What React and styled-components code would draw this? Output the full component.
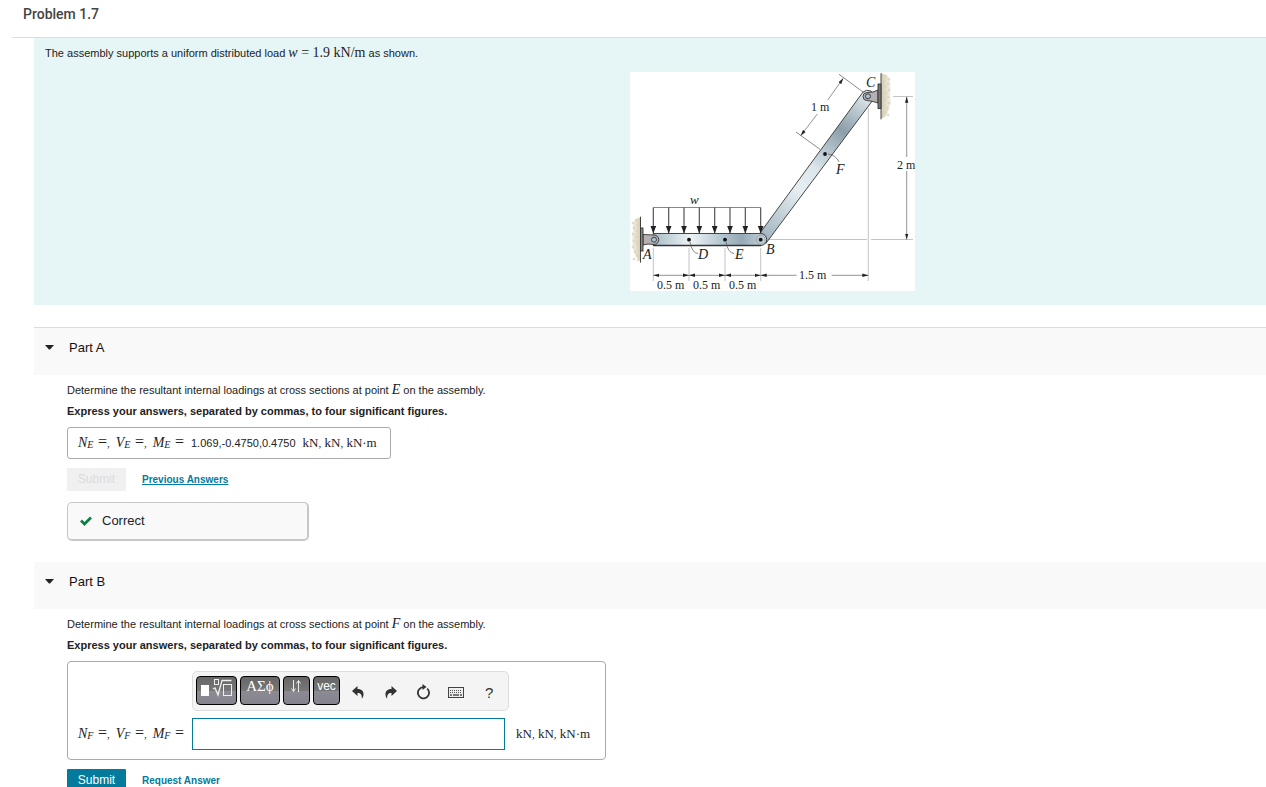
import { useState } from 'react';

import styled, { createGlobalStyle } from 'styled-components';

const dims = [
  { x: 27, text: '0.5 m' },
  { x: 63, text: '0.5 m' },
  { x: 99, text: '0.5 m' },
];
const dimLines = [
  { d: 'M197.7 28L213.3 6.3' },
  { d: 'M187.3 42L170.7 63.7' },
  { d: 'M276.7 85V24.7' },
  { d: 'M276.7 99v68.5' },
  { d: 'M23.3 203.3H59', both: true },
  { d: 'M59 203.3h36', both: true },
  { d: 'M95 203.3h35.7', both: true },
  { d: 'M166.7 203.3h-36' },
  { d: 'M201.7 203.3h36.6' },
];
const loads = [23.3, 38.7, 54, 69.3, 84.7, 100, 115.3, 130.7];
const stipple = [
  [3, 6], [6, 3], [8, 8], [4, 11], [7, 14], [3, 17], [6, 20], [9, 18], [4, 24],
  [7, 27], [3, 30], [8, 32], [5, 35], [7, 39], [4, 42], [8, 24], [8, 43],
];

export default function App() {
  return (
    <>
      <GlobalStyle />
      <Page>
        <Header>
          <h1>Problem 1.7</h1>
        </Header>
        <Main>
          <Intro>
            <p>
              The assembly supports a uniform distributed load{' '}
              <Math><i>w</i> = 1.9 kN/m</Math> as shown.
            </p>
            <FigureArea>
              <Assembly />
            </FigureArea>
          </Intro>
          <Part title="Part A" point="E" line>
            <AnswerBox>
              <Symbols point="E" />
              <Value>1.069,-0.4750,0.4750</Value>
              <Units />
            </AnswerBox>
            <Actions>
              <SubmitButton type="button" disabled>Submit</SubmitButton>
              <ActionLink href="#previous" $underline>Previous Answers</ActionLink>
            </Actions>
            <Feedback>
              <svg width="12" height="10" viewBox="0 0 12 10">
                <path d="M1 4.5l3.5 3.5L11 1.5" fill="none" stroke="#0d8043" strokeWidth="2.8" />
              </svg>
              Correct
            </Feedback>
          </Part>
          <Part title="Part B" point="F">
            <EntryBox>
              <Toolbar />
              <EntryLabel htmlFor="answerB"><Symbols point="F" /></EntryLabel>
              <AnswerInput id="answerB" type="text" />
              <EntryUnits><Units /></EntryUnits>
            </EntryBox>
            <Actions>
              <SubmitButton type="button">Submit</SubmitButton>
              <ActionLink href="#request">Request Answer</ActionLink>
            </Actions>
          </Part>
        </Main>
      </Page>
    </>
  );
}

function Part({ title, point, line, children }) {
  const [open, setOpen] = useState(true);

  return (
    <section>
      <PartHeader type="button" $line={line} aria-expanded={open} onClick={() => setOpen(!open)}>
        <svg width="9" height="5" viewBox="0 0 9 5"><path d="M0 0h9L5 4.6H4z" fill="#222" /></svg>
        {title}
      </PartHeader>
      {open && (
        <PartBody>
          <Question>
            Determine the resultant internal loadings at cross sections at point{' '}
            <Math><i>{point}</i></Math> on the assembly.
          </Question>
          <Question $bold>Express your answers, separated by commas, to four significant figures.</Question>
          {children}
        </PartBody>
      )}
    </section>
  );
}

function Symbols({ point }) {
  return (
    <SymbolList>
      {['N', 'V', 'M'].map((name, i) => (
        <span key={name}>
          <i>{name}</i><sub>{point}</sub> <b>=</b>{i < 2 && <small>,</small>}
        </span>
      ))}
    </SymbolList>
  );
}

function Units() {
  return <UnitText>kN<small>,</small> kN<small>,</small> kN·m</UnitText>;
}

function Toolbar() {
  return (
    <ToolbarArea>
      <KeyButton type="button" $width={41} aria-label="Templates">
        <svg width="33" height="20" viewBox="0 0 33 20" fill="none" stroke="#eee">
          <rect x="1" y="6" width="8" height="11" fill="#fff" stroke="none" />
          <rect x="14.5" y="0.5" width="4" height="5" />
          <path d="M13 10l2-1 3 7 4-14.5h9.500" strokeWidth="1.3" />
          <rect x="23.5" y="5.5" width="8" height="11" />
        </svg>
      </KeyButton>
      <KeyButton type="button" $width={40} $serif>ΑΣϕ</KeyButton>
      <KeyButton type="button" $width={27} aria-label="Arrows">
        <svg width="11" height="14" viewBox="0 0 11 14" fill="none" stroke="#eee">
          <path d="M2.5 1v11M0.5 9.5l2 3 2-3M7.5 13V2M5.5 4.5l2-3 2 3" />
        </svg>
      </KeyButton>
      <KeyButton type="button" $width={27}>vec</KeyButton>
      <ToolButton type="button" aria-label="Undo">
        <svg width="12" height="13" viewBox="0 0 12 13">
          <path d="M0 5L5.5 0v3C10 3 11.8 5.5 11.5 8.5 11.3 10.5 10.8 12 9.8 12.5 10 9 9 7 5.5 7v3z" fill="#333" />
        </svg>
      </ToolButton>
      <ToolButton type="button" aria-label="Redo">
        <svg width="12" height="13" viewBox="0 0 12 13">
          <path d="M12 5L6.5 0v3C2 3 0.2 5.5 0.5 8.5 0.7 10.5 1.2 12 2.2 12.5 2 9 3 7 6.5 7v3z" fill="#333" />
        </svg>
      </ToolButton>
      <ToolButton type="button" aria-label="Reset">
        <svg width="15" height="16" viewBox="0 0 15 16">
          <path d="M11.2 4.600A5.600 5.600 0 1 1 7.5 3.200" fill="none" stroke="#333" strokeWidth="1.8" />
          <path d="M6.5 0l4 3-4 3z" fill="#333" />
        </svg>
      </ToolButton>
      <ToolButton type="button" aria-label="Keyboard">
        <svg width="16" height="12" viewBox="0 0 16 12">
          <rect x="0.5" y="1.5" width="15" height="10" fill="#eee" stroke="#444" />
          <path d="M2 4.5h12M2 6.5h12" stroke="#555" strokeDasharray="1 1" />
          <path d="M2 9h2M5 9h6M12 9h2" stroke="#777" strokeWidth="2" />
        </svg>
      </ToolButton>
      <ToolButton type="button" aria-label="Help">?</ToolButton>
    </ToolbarArea>
  );
}

function Assembly() {
  return (
    <Drawing viewBox="0 0 285 219" role="img" aria-label="Assembly">
      <defs>
        <linearGradient id="beam">
          <stop offset="0" stopColor="#a9bcc7" />
          <stop offset="0.33" stopColor="#edf3f6" />
          <stop offset="0.6" stopColor="#b4c6d0" />
          <stop offset="0.78" stopColor="#94a9b6" />
          <stop offset="1" stopColor="#ccd8de" />
        </linearGradient>
        <linearGradient id="arm" gradientUnits="userSpaceOnUse" x1="131" y1="168" x2="238" y2="24">
          <stop offset="0" stopColor="#9db1bc" />
          <stop offset="0.35" stopColor="#e6eef2" />
          <stop offset="0.5" stopColor="#dce6eb" />
          <stop offset="0.76" stopColor="#8b9fab" />
          <stop offset="1" stopColor="#dfe8ec" />
        </linearGradient>
        <marker id="tip" orient="auto-start-reverse" markerUnits="userSpaceOnUse" markerWidth="6" markerHeight="4" refX="6" refY="2">
          <path d="M0 0.3l6 1.7-6 1.7z" fill="#222" />
        </marker>
        <marker id="load" orient="auto" markerUnits="userSpaceOnUse" markerWidth="8" markerHeight="6" refX="8" refY="3">
          <path d="M0 0l8 3-8 3z" fill="#222" />
        </marker>
        <linearGradient id="wallA">
          <stop offset="0" stopColor="#e8e2cf" stopOpacity="0.6" />
          <stop offset="1" stopColor="#d3cbb0" />
        </linearGradient>
        <linearGradient id="wallC">
          <stop offset="0" stopColor="#d3cbb0" />
          <stop offset="1" stopColor="#e8e2cf" stopOpacity="0.6" />
        </linearGradient>
      </defs>

      <g stroke="#aaa" strokeWidth="0.7">
        <path d="M23.3 176v33M59 176v33M95 176v33M130.7 176v33M238.3 36v173" />
        <path d="M136 167.5h101M241 167.5h42M263 24.5h20" />
      </g>
      <path d="M209 2.3l25 18.4M166 60l24 17.3" stroke="#555" strokeWidth="0.7" />
      {dimLines.map((line) => (
        <path
          key={line.d}
          d={line.d}
          stroke="#666"
          strokeWidth="0.7"
          markerStart={line.both ? 'url(#tip)' : undefined}
          markerEnd="url(#tip)"
        />
      ))}

      <path d="M11 145c-6 1-9 6-8 14-2 10-1 24 8 31z" fill="url(#wallA)" />
      <path d="M251 1c8 2 11 8 9 20 2 12-1 22-9 26z" fill="url(#wallC)" />
      {stipple.map(([x, y]) => (
        <g key={`${x}-${y}`} fill="#f6f2e4" stroke="#b9af8d" strokeWidth="0.4">
          <circle cx={x} cy={y + 145} r="1" />
          <circle cx={262 - x} cy={y + 1} r="1" />
        </g>
      ))}
      <path d="M10.5 144.7v46M251 1.3v46" stroke="#333" strokeWidth="0.9" />

      <g stroke="#333" strokeWidth="0.9">
        <path d="M130 161L232.9 20.2Q236 17 241 19Q245 23 243.1 27.8L135.8 171.5z" fill="url(#arm)" />
        <path d="M23.3 161.5h107.4a6 6 0 0 1 0 12H23.3z" fill="url(#beam)" />
        <path d="M23.3 173.5H131" strokeWidth="1.5" />
        <path d="M13 162.5l11 .5a4.5 4.5 0 0 1 0 9.5l-6-.5-5 1z" fill="#b3b1b2" />
        <path d="M248 18l-5 2-6 .5a4 4 0 0 0 0 8l6 1 5 1.500z" fill="#b3b1b2" />
        <rect x="10.5" y="156" width="2.5" height="23" fill="#888" />
        <rect x="248" y="12" width="3" height="24.5" fill="#777" />
        <circle cx="24" cy="167.7" r="2.5" fill="#a7c4d6" />
        <circle cx="238" cy="24.3" r="2.5" fill="#a7c4d6" />
      </g>
      <circle cx="130.7" cy="167.7" r="4.5" fill="none" stroke="#8b979e" strokeWidth="0.7" />
      <g fill="#111">
        <circle cx="59" cy="167.7" r="1.9" />
        <circle cx="95" cy="167.7" r="1.9" />
        <circle cx="130.7" cy="167.7" r="1.9" />
        <circle cx="195" cy="82" r="1.9" />
      </g>
      <g fill="none" stroke="#555" strokeWidth="0.7">
        <path d="M60 170q2 11 8 11.5M96 170q2 11 8 11.5M198 82q8 1 11 8" />
        <path d="M23.3 135.5h107.4" />
      </g>
      {loads.map((x) => (
        <path key={x} d={`M${x} 135.5v26`} stroke="#444" strokeWidth="1.1" markerEnd="url(#load)" />
      ))}

      <g fontFamily='"Liberation Serif", serif' fontSize="12" fill="#222">
        {dims.map((d) => <text key={d.x} x={d.x} y="217">{d.text}</text>)}
        <text x="169" y="207">1.5 m</text>
        <text x="181" y="39">1 m</text>
        <text x="267" y="97">2 m</text>
        <g fontStyle="italic" fontSize="14">
          <text x="13" y="187">A</text>
          <text x="68" y="187">D</text>
          <text x="105" y="187">E</text>
          <text x="136" y="182">B</text>
          <text x="236" y="15">C</text>
          <text x="206" y="102">F</text>
          <text x="60" y="132" fontSize="13">w</text>
        </g>
      </g>
    </Drawing>
  );
}

const GlobalStyle = createGlobalStyle`
* {
  box-sizing: border-box;
}
body {
  margin: 0;
  background-color: #fff;
  color: #222;
  font-family: "Liberation Sans", Arial, sans-serif;
  font-size: 11px;
}
button, input {
  font-family: inherit;
}
h1, p {
  margin: 0;
}
`;
const Page = styled.div`
  height: 100vh;
  overflow: hidden;
`;
const Header = styled.header`
  margin-left: 12px;
  padding: 6px 11px 15px;
  border-bottom: 1px solid #dcdcdc;
  > h1 {
    font-family: Roboto, "Liberation Sans", sans-serif;
    font-size: 14px;
    font-weight: 500;
    line-height: 16px;
    color: #444;
  }
`;
const Main = styled.main`
  margin-left: 34px;
`;
const Intro = styled.div`
  margin-bottom: 22px;
  padding: 6px 0 14px;
  background-color: #e6f6f7;
  > p {
    padding-left: 11px;
    line-height: 18px;
  }
`;
const FigureArea = styled.div`
  display: flex;
  justify-content: center;
  padding-top: 10px;
  padding-left: 245px;
`;
const Drawing = styled.svg`
  width: 285px;
  height: 219px;
  background-color: #fff;
`;
const Math = styled.span`
  font-family: "Liberation Serif", serif;
  font-size: 14px;
  line-height: 16px;
`;
const PartHeader = styled.button`
  display: flex;
  align-items: center;
  gap: 15px;
  width: 100%;
  height: ${(props) => (props.$line ? '48px' : '47px')};
  padding: 0 11px 9px;
  border: 0;
  border-top: ${(props) => (props.$line ? '1px solid #dcdcdc' : '0')};
  background-color: #f9f9f9;
  color: #111;
  font-size: 13px;
  cursor: pointer;
`;
const PartBody = styled.div`
  padding: 6px 0 21px 33px;
`;
const Question = styled.p`
  padding-bottom: 2px;
  line-height: 19px;
  font-weight: ${(props) => (props.$bold ? 'bold' : 'normal')};
`;
const SymbolList = styled(Math)`
  display: flex;
  gap: 6px;
  white-space: nowrap;
  sub {
    font-size: 10px;
    font-style: italic;
    line-height: 1px;
    vertical-align: -1px;
  }
  b {
    padding-left: 1px;
    font-size: 16px;
    font-weight: normal;
    line-height: 1px;
  }
  small {
    font-size: 11px;
  }
`;
const UnitText = styled(Math)`
  font-size: 13px;
  white-space: nowrap;
  small {
    font-size: 11px;
  }
`;
const AnswerBox = styled.div`
  display: flex;
  align-items: center;
  gap: 7px;
  width: 324px;
  height: 32px;
  margin-top: 4px;
  padding: 0 10px;
  border: 1px solid #aaa;
  border-radius: 3px;
`;
const Value = styled.span`
  font-size: 11px;
`;
const EntryBox = styled.div`
  display: grid;
  grid-template-columns: 107px 313px auto;
  gap: 7px;
  align-items: center;
  width: 539px;
  margin-top: 4px;
  padding: 9px 10px;
  border: 1px solid #aaa;
  border-radius: 4px;
`;
const EntryLabel = styled.label`
  grid-column: 1;
`;
const EntryUnits = styled.div`
  padding-left: 4px;
`;
const ToolbarArea = styled.div`
  grid-column: 2;
  display: flex;
  align-items: center;
  gap: 3px;
  width: 317px;
  height: 40px;
  padding: 0 4px 2px 3px;
  border: 1px solid #ddd;
  border-radius: 5px;
  background-color: #f4f4f4;
`;
const KeyButton = styled.button`
  display: flex;
  flex-shrink: 0;
  justify-content: center;
  width: ${(props) => props.$width}px;
  height: 29px;
  padding: 2px 0;
  border: 1px solid #000;
  border-radius: 4px;
  background: linear-gradient(#666 0%, #777 50%, #8c8b94 51%, #85848c 100%);
  color: #fff;
  font-family: ${(props) => (props.$serif ? '"Liberation Serif", serif' : 'inherit')};
  font-size: ${(props) => (props.$serif ? '15px' : '12px')};
  line-height: 15px;
  cursor: pointer;
`;
const ToolButton = styled.button`
  display: flex;
  flex: 1;
  align-items: center;
  justify-content: center;
  height: 30px;
  padding: 4px 0 0;
  border: 0;
  background: none;
  color: #333;
  font-size: 15px;
  cursor: pointer;
`;
const AnswerInput = styled.input`
  width: 100%;
  height: 32px;
  border: 1px solid #047a9c;
`;
const Actions = styled.div`
  display: flex;
  align-items: center;
  gap: 16px;
  margin-top: 9px;
`;
const SubmitButton = styled.button`
  width: 59px;
  height: 23px;
  padding: 0 0 2px;
  border: 0;
  border-radius: 1px;
  background-color: #047a9c;
  color: #fff;
  font-size: 12px;
  &:disabled {
    background-color: #f0f0f0;
    color: #dcdcdc;
  }
`;
const ActionLink = styled.a`
  padding-bottom: 1px;
  color: #047a9c;
  font-size: 10px;
  font-weight: bold;
  text-decoration: ${(props) => (props.$underline ? 'underline' : 'none')};
`;
const Feedback = styled.div`
  display: flex;
  align-items: center;
  gap: 10px;
  width: 242px;
  height: 39px;
  margin-top: 11px;
  padding: 0 12px 1px;
  border: 1px solid #c7c7c7;
  border-width: 1px 2px 2px 1px;
  border-radius: 5px;
  background-color: #f9f9f9;
  font-size: 13px;
`;
